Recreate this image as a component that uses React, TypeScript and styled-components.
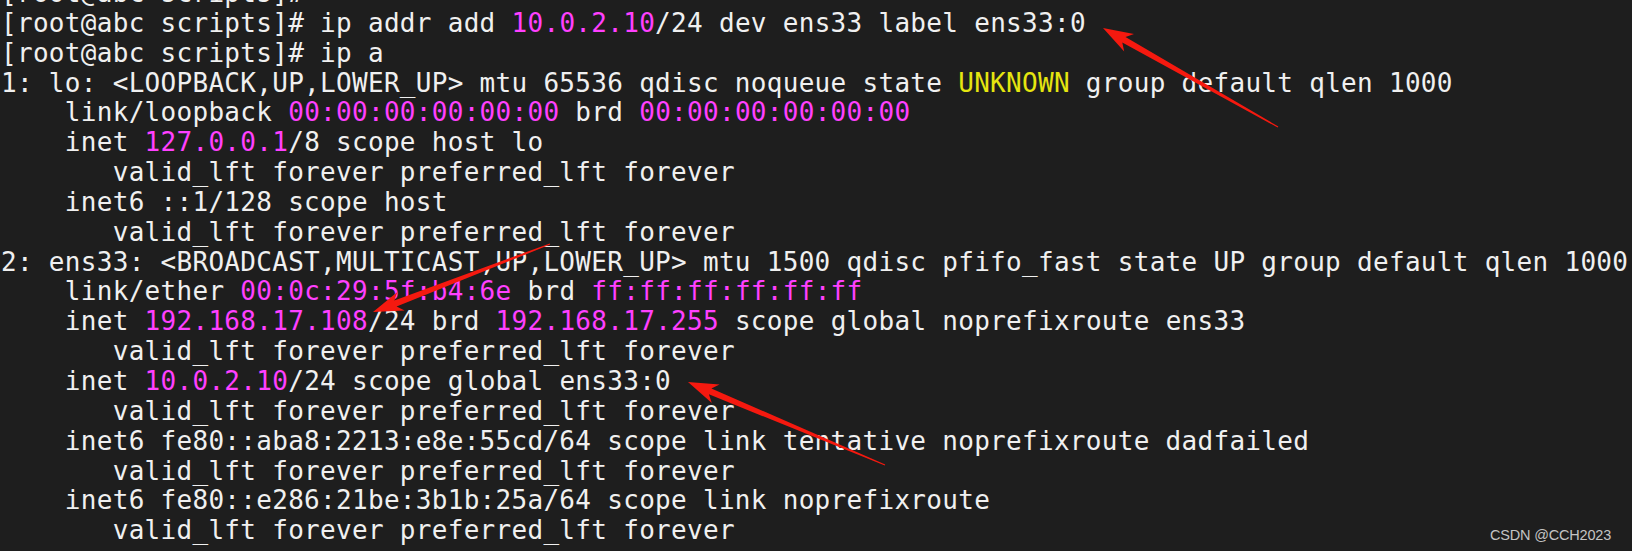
import React from 'react';
import styled, { createGlobalStyle } from 'styled-components';

const GlobalStyle = createGlobalStyle`
  html, body {
    margin: 0;
    padding: 0;
    background: #1e1e1e;
  }
`;

const Page = styled.div`
  position: relative;
  width: 1632px;
  height: 551px;
  overflow: hidden;
  background: #1e1e1e;
`;

const Terminal = styled.div`
  margin-top: -21px;
  padding-left: 1px;
  font-family: 'DejaVu Sans Mono', 'Liberation Mono', monospace;
  font-size: 26px;
  line-height: 29.85px;
  letter-spacing: 0.3px;
  color: #f0f0f0;
`;

const Line = styled.div`
  white-space: pre;
  height: 29.85px;
`;

const Mag = styled.span`
  color: #ff40ff;
`;

const Yel = styled.span`
  color: #e5e510;
`;

const Watermark = styled.div`
  position: absolute;
  right: 21px;
  bottom: 8px;
  font-family: 'Liberation Sans', Arial, sans-serif;
  font-size: 14.5px;
  line-height: 16px;
  letter-spacing: -0.2px;
  color: #c4c4c4;
`;

const Overlay = styled.svg`
  position: absolute;
  left: 0;
  top: 0;
  pointer-events: none;
`;

type Pt = [number, number];

function arrowPoints(tail: Pt, tip: Pt) {
  const dx = tip[0] - tail[0];
  const dy = tip[1] - tail[1];
  const len = Math.hypot(dx, dy);
  const ux = dx / len;
  const uy = dy / len;
  const nx = -uy;
  const ny = ux;
  const headLen = 30;
  const bx = tip[0] - ux * headLen;
  const by = tip[1] - uy * headLen;
  const p = (x: number, y: number, w: number): string =>
    `${(x + nx * w).toFixed(1)},${(y + ny * w).toFixed(1)}`;
  const back = 6;
  return [
    p(tail[0], tail[1], 0.6),
    p(bx + ux * back, by + uy * back, 3.2),
    p(bx, by, 10),
    `${tip[0]},${tip[1]}`,
    p(bx, by, -10),
    p(bx + ux * back, by + uy * back, -3.2),
    p(tail[0], tail[1], -0.6),
  ].join(' ');
}

const arrows: { tail: Pt; tip: Pt }[] = [
  { tail: [1278, 127], tip: [1103, 28] },
  { tail: [550, 244], tip: [373, 312] },
  { tail: [885, 465], tip: [688, 382] },
];

const valid = '       valid_lft forever preferred_lft forever';

export default function App() {
  return (
    <>
      <GlobalStyle />
      <Page>
        <Terminal>
          <Line>[root@abc scripts]# </Line>
          <Line>
            [root@abc scripts]# ip addr add <Mag>10.0.2.10</Mag>/24 dev ens33 label ens33:0
          </Line>
          <Line>[root@abc scripts]# ip a</Line>
          <Line>
            1: lo: &lt;LOOPBACK,UP,LOWER_UP&gt; mtu 65536 qdisc noqueue state <Yel>UNKNOWN</Yel> group default qlen 1000
          </Line>
          <Line>
            {'    link/loopback '}<Mag>00:00:00:00:00:00</Mag> brd <Mag>00:00:00:00:00:00</Mag>
          </Line>
          <Line>
            {'    inet '}<Mag>127.0.0.1</Mag>/8 scope host lo
          </Line>
          <Line>{valid}</Line>
          <Line>{'    inet6 ::1/128 scope host'}</Line>
          <Line>{valid}</Line>
          <Line>
            2: ens33: &lt;BROADCAST,MULTICAST,UP,LOWER_UP&gt; mtu 1500 qdisc pfifo_fast state UP group default qlen 1000
          </Line>
          <Line>
            {'    link/ether '}<Mag>00:0c:29:5f:b4:6e</Mag> brd <Mag>ff:ff:ff:ff:ff:ff</Mag>
          </Line>
          <Line>
            {'    inet '}<Mag>192.168.17.108</Mag>/24 brd <Mag>192.168.17.255</Mag> scope global noprefixroute ens33
          </Line>
          <Line>{valid}</Line>
          <Line>
            {'    inet '}<Mag>10.0.2.10</Mag>/24 scope global ens33:0
          </Line>
          <Line>{valid}</Line>
          <Line>{'    inet6 fe80::aba8:2213:e8e:55cd/64 scope link tentative noprefixroute dadfailed'}</Line>
          <Line>{valid}</Line>
          <Line>{'    inet6 fe80::e286:21be:3b1b:25a/64 scope link noprefixroute'}</Line>
          <Line>{valid}</Line>
        </Terminal>

        <Overlay width="1632" height="551" viewBox="0 0 1632 551">
          {arrows.map((a, i) => (
            <polygon key={i} points={arrowPoints(a.tail, a.tip)} fill="#f5190f" />
          ))}
        </Overlay>

        <Watermark>CSDN @CCH2023</Watermark>
      </Page>
    </>
  );
}
